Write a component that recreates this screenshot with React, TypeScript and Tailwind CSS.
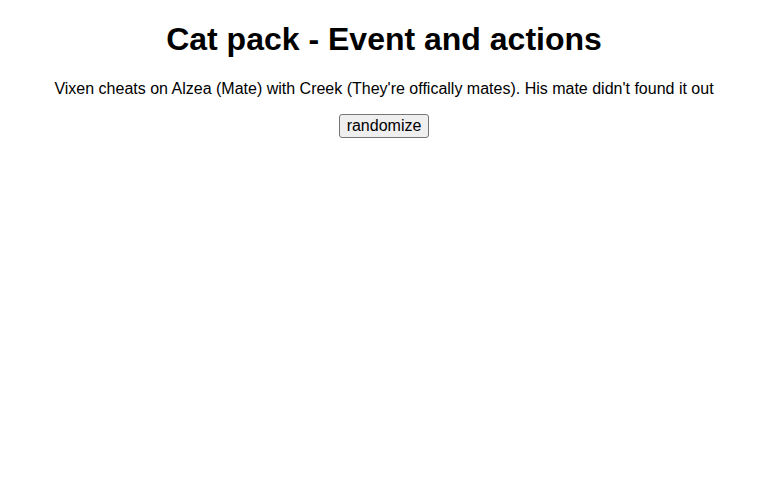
export default function App() {
  return (
    <div className="text-center text-black bg-white min-h-screen pt-[21.44px]" style={{ fontFamily: '"Liberation Sans", Arial, sans-serif' }}>
      <h1 className="text-[32px] leading-[1.15] font-bold mb-[21.44px]">Cat pack - Event and actions</h1>
      <p className="text-base leading-[1.15] mb-4">
        Vixen cheats on Alzea (Mate) with Creek (They're offically mates). His mate didn't found it out
      </p>
      <button className="text-base leading-[1.15] px-[7px] py-[2px] border border-[#767676] bg-[#efefef] rounded-[3px] text-black">
        randomize
      </button>
    </div>
  );
}
